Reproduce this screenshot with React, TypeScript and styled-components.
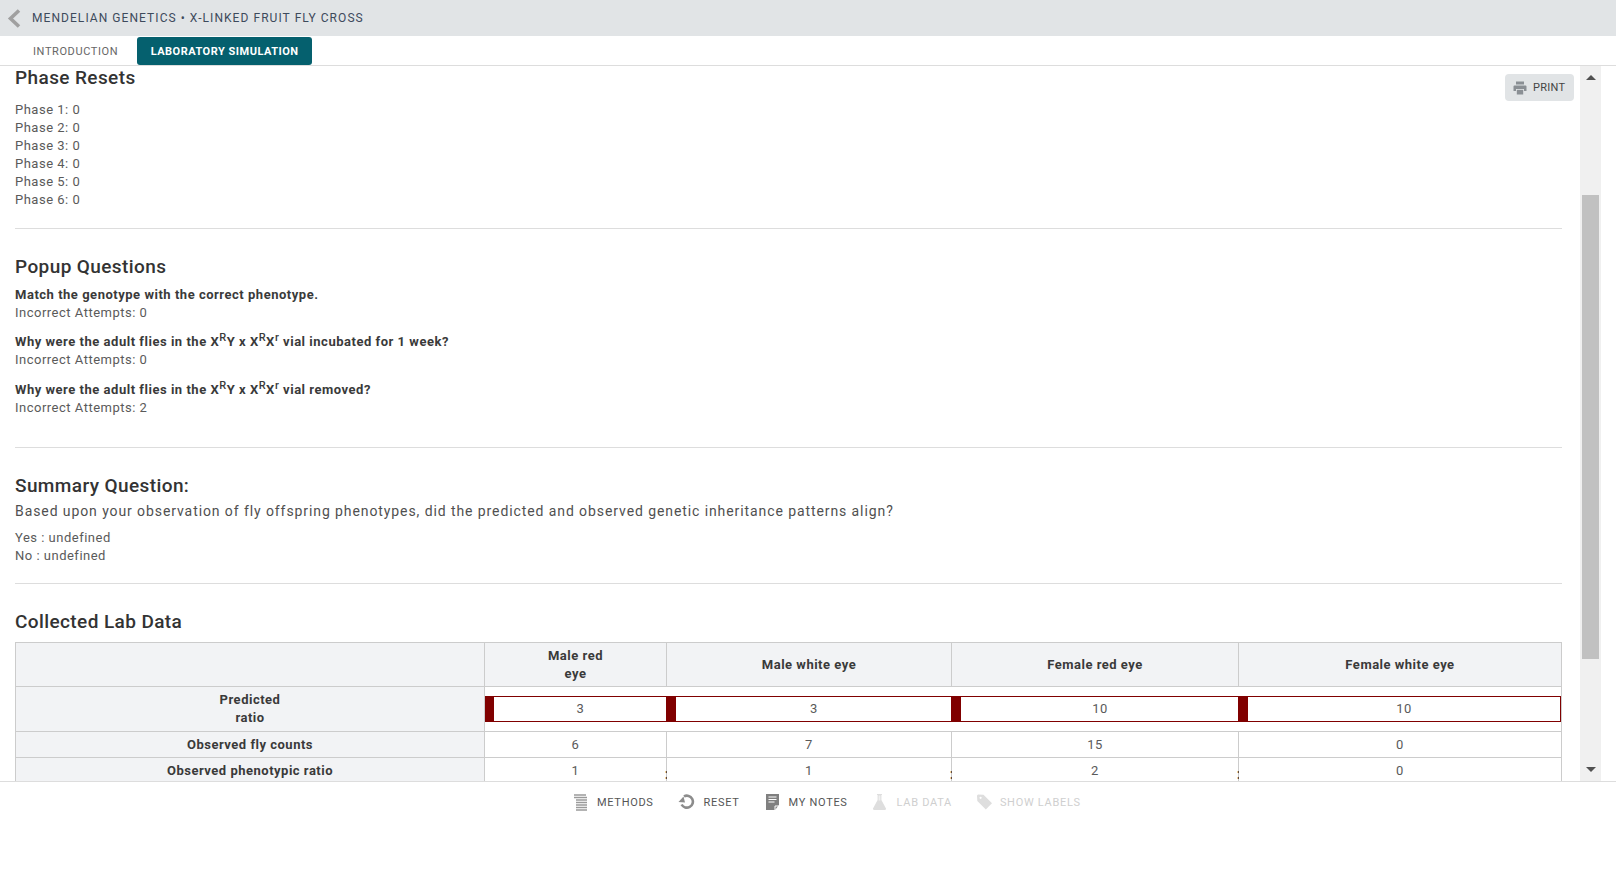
import React from "react";
import styled, { createGlobalStyle } from "styled-components";

const Global = createGlobalStyle`
  html, body { margin: 0; padding: 0; background: #fff; }
  body { font-family: Roboto, "Liberation Sans", sans-serif; color: #444; }
  * { box-sizing: border-box; }
`;
const Page = styled.div`
  width: 1616px; height: 895px; display: flex; flex-direction: column; overflow: hidden; background: #fff;
`;
const Header = styled.header`
  height: 36px; flex: none; background: #e1e4e6; display: flex; align-items: center; padding-left: 7px;
`;
const Title = styled.div`
  margin-left: 11px; font-size: 12px; letter-spacing: 1.06px; color: #3d4a5c; line-height: 36px;
`;
const TabBar = styled.nav`
  height: 30px; flex: none; border-bottom: 1px solid #ddd; display: flex; padding-left: 19px; align-items: flex-start; padding-top: 1px;
  gap: 5px;
`;
const Tab = styled.div<{ $active?: boolean }>`
  height: 28px; line-height: 29px; padding: 0 ${(p) => (p.$active ? "13.5px" : "14px")}; font-size: 11px;
  letter-spacing: ${(p) => (p.$active ? "0.5px" : "0.6px")};
  border-radius: 3px;
  background: ${(p) => (p.$active ? "#05606e" : "transparent")};
  color: ${(p) => (p.$active ? "#fff" : "#666")};
  font-weight: ${(p) => (p.$active ? 700 : 400)};
`;
const Main = styled.div`
  height: 715px; flex: none; display: flex; padding-right: 15px; position: relative;
`;
const Content = styled.div`
  flex: 1; min-width: 0; overflow: hidden; padding: 0 18px 0 15px; position: relative;
`;
const Track = styled.div`
  width: 21px; flex: none; background: #f0f0f0; display: flex; flex-direction: column; align-items: center;
`;
const Arrow = styled.div<{ $down?: boolean }>`
  width: 0; height: 0; flex: none; border-left: 5px solid transparent; border-right: 5px solid transparent;
  ${(p) => (p.$down ? "border-top: 5px solid #505050; margin-bottom: 9px;" : "border-bottom: 5px solid #505050; margin-top: 9px;")}
`;
const Thumb = styled.div`
  width: 17px; height: 464px; background: #c1c1c1; margin-top: 115px; margin-bottom: auto;
`;
const PrintButton = styled.button`
  position: absolute; top: 8px; right: 6px; width: 69px; height: 27px; border: 0; border-radius: 4px;
  background: #e1e4e6; display: flex; align-items: center; padding: 0 0 0 8px; gap: 6px;
  font-family: inherit; font-size: 11px; letter-spacing: 0.25px; color: #444;
`;
const H2 = styled.h2<{ $mb?: number }>`
  font-size: 19px; font-weight: 500; margin: 0 0 ${(p) => p.$mb ?? 0}px; color: #333; line-height: 24px; letter-spacing: 0.4px;
`;
const Section = styled.section<{ $pad: number }>`
  border-bottom: 1px solid #ddd; padding-bottom: ${(p) => p.$pad}px; margin-bottom: 26px;
`;
const Small = styled.div`
  font-size: 13px; line-height: 18px; letter-spacing: 0.5px; color: #5a5a5a;
`;
const List = styled.div`
  margin-top: 11px;
`;
const QBlock = styled.div`
  margin-bottom: 11.25px;
`;
const Q = styled.div`
  font-size: 13px; line-height: 18px; letter-spacing: 0.52px; color: #3a3a3a; font-weight: 700;
  sup { font-size: 11px; line-height: 0; font-weight: 500; }
`;
const Lead = styled.div`
  font-size: 14px; line-height: 20px; letter-spacing: 0.91px; color: #505050; margin-bottom: 8px;
`;
const DataGrid = styled.div`
  border-left: 1px solid #ccc; border-top: 1px solid #ccc; border-right: 1px solid #ccc;
  display: grid; grid-template-columns: 469px 182px 285px 287px 1fr; grid-auto-rows: auto;
`;
const Cell = styled.div<{ $head?: boolean; $h: number; $bold?: boolean; $last?: boolean; $nudge?: number }>`
  height: ${(p) => p.$h}px; display: flex; align-items: center; justify-content: center; text-align: center;
  position: relative;
  padding-top: ${(p) => p.$nudge ?? 0}px;
  background: ${(p) => (p.$head ? "#f2f3f5" : "#fff")};
  border-bottom: 1px solid #ccc;
  border-right: ${(p) => (p.$last ? "0" : "1px solid #ccc")};
  font-size: 13px; line-height: 18px; letter-spacing: 0.5px;
  font-weight: ${(p) => (p.$bold ? 700 : 400)};
  color: ${(p) => (p.$bold ? "#3a3a3a" : "#5a5a5a")};
`;
const ClipCell = styled(Cell)`
  border-bottom: 0; align-items: flex-start; padding-top: 4px;
`;
const RatioCell = styled.div`
  height: 45px; padding: 9px 0 10px; border-bottom: 1px solid #ccc;
`;
const RatioBox = styled.div<{ $first?: boolean; $last?: boolean }>`
  height: 26px; border: 1px solid #800000;
  border-left: ${(p) => (p.$first ? 9 : 10)}px solid #800000;
  margin-left: ${(p) => (p.$first ? 0 : -1)}px;
  border-right: ${(p) => (p.$last ? "1px solid #800000" : "0")};
  display: flex; align-items: center; justify-content: center;
  font-size: 13px; letter-spacing: 0.5px; color: #5a5a5a;
`;
const Colon = styled.span`
  position: absolute; right: -3px; top: 7px; font-size: 15px; line-height: 18px; font-weight: 700; color: #444; letter-spacing: 0;
`;
const Footer = styled.footer`
  flex: 1; border-top: 1px solid #ddd; display: flex; align-items: flex-start; padding: 10px 0 0 573px;
`;
const Action = styled.div<{ $off?: boolean; $gap: number; $ml: number }>`
  display: flex; align-items: center; height: 20px; gap: ${(p) => p.$gap}px; margin-left: ${(p) => p.$ml}px;
  font-size: 11px; letter-spacing: 0.7px;
  color: ${(p) => (p.$off ? "#cfcfcf" : "#555")};
  svg { display: block; flex: none; }
`;

const Back = () => (
  <svg width="14" height="21" viewBox="0 0 14 21"><path d="M12 2.5 3.5 10.5 12 18.5" fill="none" stroke="#a0a0a0" strokeWidth="3.6" /></svg>
);
const Printer = () => (
  <svg width="14" height="14" viewBox="0 0 14 14" fill="#8a8f94">
    <rect x="3" y="0.5" width="8" height="3" />
    <path d="M1.5 4.5h11a1 1 0 0 1 1 1V10h-2.5V8H3v2H.5V5.5a1 1 0 0 1 1-1z" />
    <rect x="3.8" y="8.8" width="6.4" height="4.7" />
  </svg>
);
const Methods = () => (
  <svg width="16" height="17" viewBox="0 0 16 17" stroke="#9a9a9a" strokeWidth="1.4">
    <path d="M1 1h12M1 3.5h2M3 3.5h11M3 6h11M3 8.5h11M3 11h11M3 13.5h11M3 16h11" />
  </svg>
);
const Reset = () => (
  <svg width="17" height="16" viewBox="0 0 17 16">
    <path d="M6 2.4A6 6 0 1 1 3.6 10.5" fill="none" stroke="#8c8c8c" strokeWidth="2.6" />
    <path d="M0.5 8 5.5 2.5 7 8.5z" fill="#8c8c8c" />
  </svg>
);
const Notes = () => (
  <svg width="13" height="16" viewBox="0 0 13 16">
    <path d="M0 0h13v11l-4 5H0z" fill="#808080" />
    <path d="M2.5 3h8M2.5 5.5h8M2.5 8h6" stroke="#fff" strokeWidth="1" />
    <path d="M9 16v-4h4" fill="none" stroke="#fff" strokeWidth="1" />
  </svg>
);
const Flask = () => (
  <svg width="13" height="16" viewBox="0 0 13 16" fill="#dedede">
    <path d="M4 0h5v1H8.4v5l4.3 8a1.2 1.2 0 0 1-1 2H1.3a1.2 1.2 0 0 1-1-2l4.3-8V1H4z" />
    <path d="M5.6 1.5h1.8v5H5.6z" fill="#f0f0f0" />
  </svg>
);
const Tag = () => (
  <svg width="15" height="16" viewBox="0 0 15 16" fill="#dedede">
    <path d="M0 1.5 1 .5l5.5.3L15 9.3 8.8 15.5.3 7z" />
    <circle cx="3.6" cy="3.8" r="1.1" fill="#fff" />
  </svg>
);

export default function App() {
  return (
    <Page>
      <Global />
      <Header>
        <Back />
        <Title>MENDELIAN GENETICS • X-LINKED FRUIT FLY CROSS</Title>
      </Header>
      <TabBar>
        <Tab>INTRODUCTION</Tab>
        <Tab $active>LABORATORY SIMULATION</Tab>
      </TabBar>
      <Main>
        <Content>
          <PrintButton><Printer />PRINT</PrintButton>
          <Section $pad={19}>
            <H2>Phase Resets</H2>
            <List>
              {[1, 2, 3, 4, 5, 6].map((n) => <Small key={n}>Phase {n}: 0</Small>)}
            </List>
          </Section>
          <Section $pad={18.75}>
            <H2 $mb={7}>Popup Questions</H2>
            <QBlock>
              <Q>Match the genotype with the correct phenotype.</Q>
              <Small>Incorrect Attempts: 0</Small>
            </QBlock>
            <QBlock>
              <Q>Why were the adult flies in the X<sup>R</sup>Y x X<sup>R</sup>X<sup>r</sup> vial incubated for 1 week?</Q>
              <Small>Incorrect Attempts: 0</Small>
            </QBlock>
            <QBlock>
              <Q>Why were the adult flies in the X<sup>R</sup>Y x X<sup>R</sup>X<sup>r</sup> vial removed?</Q>
              <Small>Incorrect Attempts: 2</Small>
            </QBlock>
          </Section>
          <Section $pad={18}>
            <H2 $mb={3}>Summary Question:</H2>
            <Lead>Based upon your observation of fly offspring phenotypes, did the predicted and observed genetic inheritance patterns align?</Lead>
            <Small>Yes : undefined</Small>
            <Small>No : undefined</Small>
          </Section>
          <H2 $mb={8}>Collected Lab Data</H2>
          <DataGrid>
            <Cell $head $h={44} />
            <Cell $head $bold $h={44} $nudge={2}>Male red<br />eye</Cell>
            <Cell $head $bold $h={44} $nudge={2}>Male white eye</Cell>
            <Cell $head $bold $h={44} $nudge={2}>Female red eye</Cell>
            <Cell $head $bold $last $h={44} $nudge={2}>Female white eye</Cell>

            <Cell $head $bold $h={45}>Predicted<br />ratio</Cell>
            <RatioCell><RatioBox $first>3</RatioBox></RatioCell>
            <RatioCell><RatioBox>3</RatioBox></RatioCell>
            <RatioCell><RatioBox>10</RatioBox></RatioCell>
            <RatioCell><RatioBox $last>10</RatioBox></RatioCell>

            <Cell $head $bold $h={26} $nudge={2}>Observed fly counts</Cell>
            <Cell $h={26} $nudge={2}>6</Cell>
            <Cell $h={26} $nudge={2}>7</Cell>
            <Cell $h={26} $nudge={2}>15</Cell>
            <Cell $last $h={26} $nudge={2}>0</Cell>

            <ClipCell $head $bold $h={30}>Observed phenotypic ratio</ClipCell>
            <ClipCell $h={30}>1<Colon>:</Colon></ClipCell>
            <ClipCell $h={30}>1<Colon>:</Colon></ClipCell>
            <ClipCell $h={30}>2<Colon>:</Colon></ClipCell>
            <ClipCell $last $h={30}>0</ClipCell>
          </DataGrid>
        </Content>
        <Track>
          <Arrow />
          <Thumb />
          <Arrow $down />
        </Track>
      </Main>
      <Footer>
        <Action $gap={8} $ml={0}><Methods />METHODS</Action>
        <Action $gap={9} $ml={24}><Reset />RESET</Action>
        <Action $gap={10} $ml={26}><Notes />MY NOTES</Action>
        <Action $off $gap={11} $ml={25}><Flask />LAB DATA</Action>
        <Action $off $gap={8} $ml={25}><Tag />SHOW LABELS</Action>
      </Footer>
    </Page>
  );
}
